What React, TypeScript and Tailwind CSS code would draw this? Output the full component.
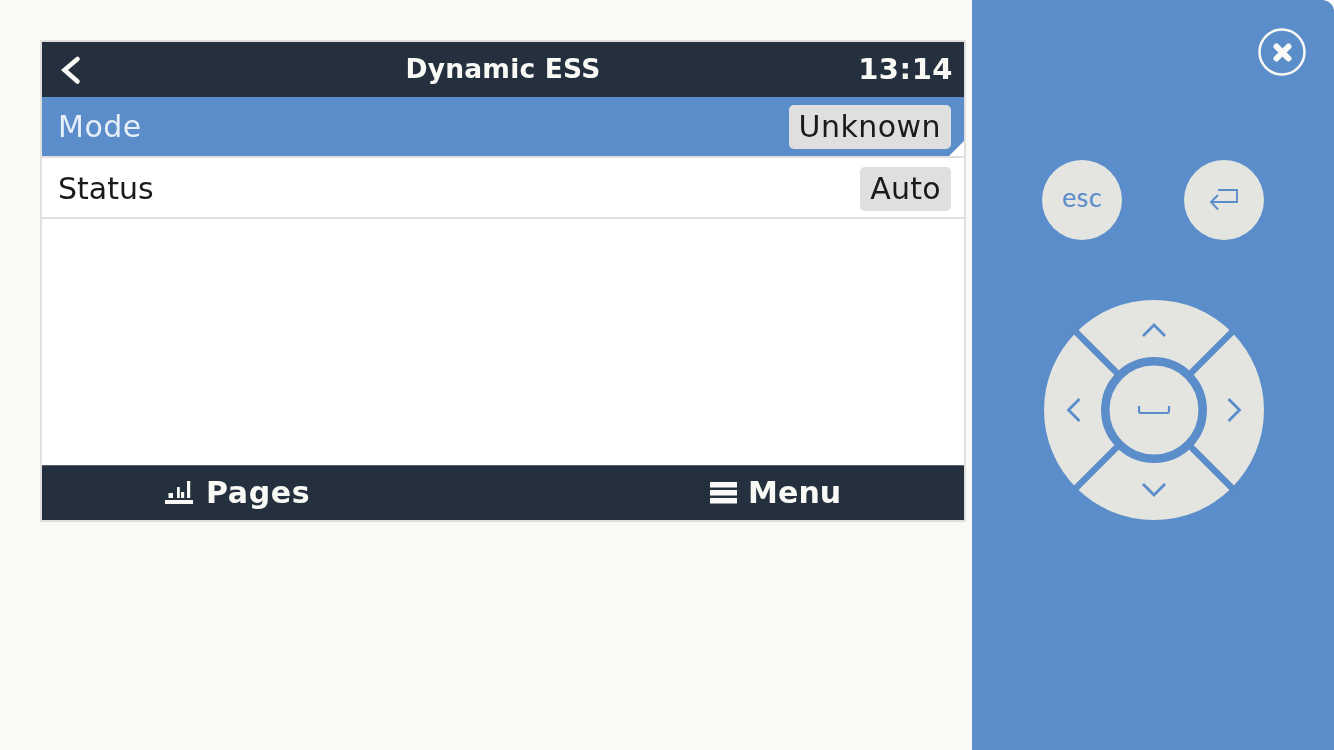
// App.tsx
import React from 'react';

const BLUE = '#5a8dca';

function BackIcon() {
  return (
    <svg width="22" height="32" viewBox="0 0 22 32" fill="none" stroke="#f9faf5" strokeWidth="4.6" strokeLinecap="round" className="block blur-[0.4px]">
      <path d="M17.5 5 L4.5 16 L17.5 27.5" />
    </svg>
  );
}

function PagesIcon() {
  return (
    <svg width="28" height="24" viewBox="0 0 28 24" fill="#f9faf5" className="block blur-[0.4px]">
      <rect x="0" y="19" width="28" height="4" />
      <rect x="3.5" y="12" width="4.5" height="5" />
      <rect x="12" y="6" width="2.8" height="11" />
      <rect x="16" y="11" width="3.2" height="6" />
      <rect x="22" y="0" width="3.2" height="17" />
    </svg>
  );
}

function MenuIcon() {
  return (
    <svg width="27" height="22" viewBox="0 0 27 22" fill="#f9faf5" className="block blur-[0.4px]">
      <rect x="0" y="0" width="27" height="5.5" />
      <rect x="0" y="8" width="27" height="5.5" />
      <rect x="0" y="16" width="27" height="5.5" />
    </svg>
  );
}

function CloseButton() {
  return (
    <button type="button" aria-label="Close" className="mt-7 mr-7 self-end">
      <svg width="48" height="48" viewBox="0 0 48 48" fill="none" stroke="#f9faf5" className="block">
        <circle cx="24" cy="24" r="22.5" strokeWidth="2.5" />
        <path d="M18.5 18.5 L30.5 30.5 M30.5 18.5 L18.5 30.5" strokeWidth="6" strokeLinecap="round" />
      </svg>
    </button>
  );
}

function EnterIcon() {
  return (
    <svg width="30" height="24" viewBox="0 0 30 24" fill="none" stroke={BLUE} strokeWidth="1.9" className="block">
      <path d="M9 2 H28 V14 H2" />
      <path d="M9 7 L2 14 L9 21.5" />
    </svg>
  );
}

function DPad() {
  return (
    <svg width="220" height="220" viewBox="0 0 220 220" className="block">
      <circle cx="110" cy="110" r="110" fill="#e4e5e1" />
      <g stroke={BLUE} strokeWidth="6.5">
        <path d="M30 30 L74 74 M190 30 L146 74 M30 190 L74 146 M190 190 L146 146" />
      </g>
      <circle cx="110" cy="110" r="48.7" fill="#e4e5e1" stroke={BLUE} strokeWidth="8.5" />
      <g fill="none" stroke={BLUE} strokeWidth="2.8">
        <path d="M99 36 L110 25 L121 36" />
        <path d="M99 184 L110 195 L121 184" />
        <path d="M35.5 99 L24.5 110 L35.5 121" />
        <path d="M184.5 99 L195.5 110 L184.5 121" />
      </g>
      <path d="M95 106 V111 Q95 113 97 113 H123 Q125 113 125 111 V106" fill="none" stroke={BLUE} strokeWidth="2.2" />
    </svg>
  );
}

export default function App() {
  const dejavu = "font-['DejaVu_Sans',sans-serif]";
  return (
    <div className="flex h-[750px] w-[1334px] overflow-hidden bg-[#f9faf5]">
      <div className="w-[972px] pt-10 pl-10">
        <div className={`flex h-[482px] w-[926px] flex-col border-2 border-[#dfdfdd] bg-white ${dejavu}`}>
          <div className="grid h-[55px] shrink-0 grid-cols-[1fr_auto_1fr] items-center bg-[#25303f] text-[#f9faf5]">
            <div className="pl-[18px]">
              <BackIcon />
            </div>
            <div className="-mt-px text-[26.5px] font-bold leading-none tracking-[0.2px] blur-[0.5px]">Dynamic ESS</div>
            <div className="-mt-px pr-[11px] text-right text-[29px] font-bold leading-none tracking-[0.5px] blur-[0.5px]">13:14</div>
          </div>

          <div className="relative flex h-[61px] shrink-0 items-center justify-between border-b-2 border-[#dfdfdd] bg-[#5a8dca] pr-[13px] pl-4">
            <span className="text-[30px] leading-none tracking-[0.5px] text-[#e6eef8] blur-[0.5px]">Mode</span>
            <span className="flex h-[44px] items-center rounded-[5px] bg-[#dfdfdf] px-[10px] text-[30px] tracking-[0.45px] text-[#1a1a1a]">
              <span className="blur-[0.5px]">Unknown</span>
            </span>
            <svg width="15" height="15" viewBox="0 0 15 15" className="absolute right-0 bottom-0" fill="#fff">
              <polygon points="15,0 15,15 0,15" />
            </svg>
          </div>

          <div className="flex h-[61px] shrink-0 items-center justify-between border-b-2 border-[#dfdfdd] pt-[2px] pr-[13px] pl-4">
            <span className="text-[30px] leading-none text-[#1a1a1a] blur-[0.5px]">Status</span>
            <span className="flex h-[44px] items-center rounded-[5px] bg-[#dfdfdf] px-[10px] text-[30px] tracking-[0.3px] text-[#1a1a1a]">
              <span className="blur-[0.5px]">Auto</span>
            </span>
          </div>

          <div className="flex-1" />

          <div className="flex h-[55px] shrink-0 items-center border-t border-[#5b636e] bg-[#25303f] text-[30px] font-bold leading-none text-[#f9faf5]">
            <div className="flex w-[668px] items-center gap-[13px] pl-[123px]">
              <PagesIcon />
              <span className="tracking-[0.6px] blur-[0.5px]">Pages</span>
            </div>
            <div className="flex items-center gap-[11px]">
              <MenuIcon />
              <span className="tracking-[0.1px] blur-[0.5px]">Menu</span>
            </div>
          </div>
        </div>
      </div>

      <div className="flex w-[362px] flex-col rounded-tr-xl bg-[#5a8dca]">
        <CloseButton />
        <div className="mt-[84px] flex gap-[62px] pl-[70px]">
          <button type="button" className="flex h-20 w-20 items-center justify-center rounded-full bg-[#e4e5e1] pb-[6px] font-['Lato',sans-serif] text-[27px] tracking-[0.4px] text-[#5a8dca]">
            esc
          </button>
          <button type="button" aria-label="Enter" className="flex h-20 w-20 items-center justify-center rounded-full bg-[#e4e5e1]">
            <EnterIcon />
          </button>
        </div>
        <div className="mt-[60px] ml-[72px]">
          <DPad />
        </div>
      </div>
    </div>
  );
}
